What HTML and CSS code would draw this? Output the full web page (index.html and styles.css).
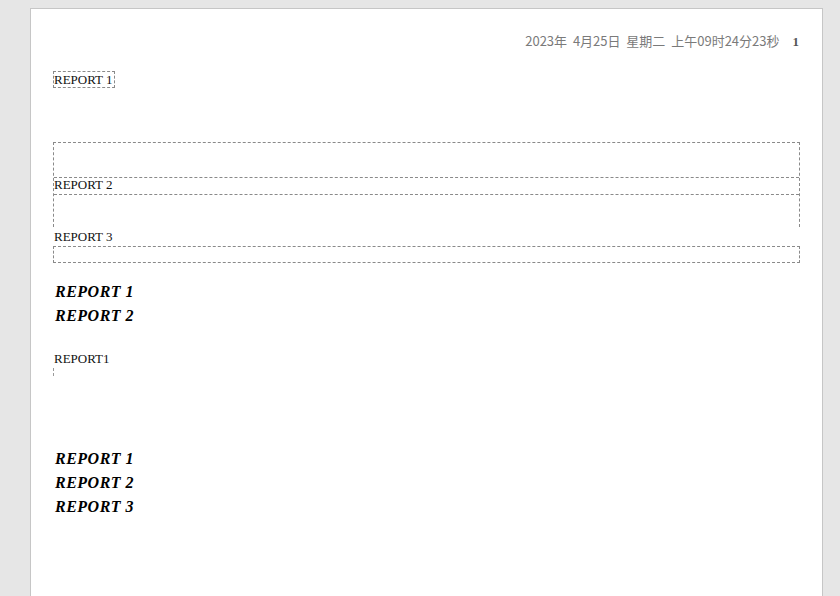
FILE: index.html
```html
<!DOCTYPE html>
<html>
<head>
<meta charset="utf-8">
<link rel="stylesheet" href="styles.css">
</head>
<body>
<div class="page">
  <div class="header">
    <span class="date">2023年&nbsp;&nbsp;4月25日&nbsp;&nbsp;星期二&nbsp;&nbsp;上午09时24分23秒</span>
    <span class="pagenum">1</span>
  </div>
  <div class="field-box">REPORT 1</div>
  <div class="group">
    <div class="group-top"></div>
    <div class="group-row">REPORT 2</div>
    <div class="group-rest"></div>
  </div>
  <div class="plain-line">REPORT 3</div>
  <div class="empty-box"></div>
  <div class="bold-list first">
    <div class="bold-item">REPORT 1</div>
    <div class="bold-item">REPORT 2</div>
  </div>
  <div class="plain-line report1">REPORT1</div>
  <div class="tiny-mark"></div>
  <div class="bold-list second">
    <div class="bold-item">REPORT 1</div>
    <div class="bold-item">REPORT 2</div>
    <div class="bold-item">REPORT 3</div>
  </div>
</div>
</body>
</html>
```
FILE: styles.css
```css
html, body {
  margin: 0;
  padding: 0;
  background: #e6e6e6;
  overflow: hidden;
}
.page {
  box-sizing: border-box;
  margin: 8px 0 0 30px;
  width: 793px;
  min-height: 620px;
  background: #fff;
  border: 1px solid #c6c6c6;
  border-bottom: none;
  padding: 23px 22px 0 22px;
  font-family: "Liberation Serif", "Times New Roman", serif;
  font-size: 13px;
  color: #111;
}
.header {
  display: flex;
  justify-content: flex-end;
  align-items: baseline;
  gap: 13px;
  height: 18px;
  line-height: 18px;
}
.date {
  font-family: "Noto Sans CJK SC", "Noto Sans", sans-serif;
  font-size: 13px;
  color: #7a7a7a;
}
.pagenum {
  font-family: "Liberation Serif", serif;
  font-weight: bold;
  font-size: 13px;
  color: #555;
  padding-right: 1px;
}
.field-box {
  display: inline-block;
  margin-top: 21px;
  border: 1px dashed #8a8a8a;
  line-height: 15px;
  padding-right: 1px;
}
.group {
  margin-top: 54px;
  border: 1px dashed #8a8a8a;
  border-bottom: none;
}
.group-top {
  height: 34px;
  border-bottom: 1px dashed #8a8a8a;
}
.group-row {
  line-height: 14px;
  padding-bottom: 2px;
  border-bottom: 1px dashed #8a8a8a;
}
.group-rest {
  height: 32px;
}
.plain-line {
  margin-top: 2px;
  line-height: 16px;
  padding-left: 1px;
}
.empty-box {
  box-sizing: border-box;
  margin-top: 1px;
  height: 17px;
  border: 1px dashed #8a8a8a;
}
.bold-list {
  font-size: 16px;
  font-weight: bold;
  font-style: italic;
  line-height: 24px;
  padding-left: 2px;
  letter-spacing: 0.5px;
  color: #000;
}
.bold-list.first {
  margin-top: 17px;
}
.plain-line.report1 {
  margin-top: 23px;
}
.tiny-mark {
  margin-top: 1px;
  width: 1px;
  height: 8px;
  border-left: 1px dashed #9a9a9a;
}
.bold-list.second {
  margin-top: 71px;
}
```
